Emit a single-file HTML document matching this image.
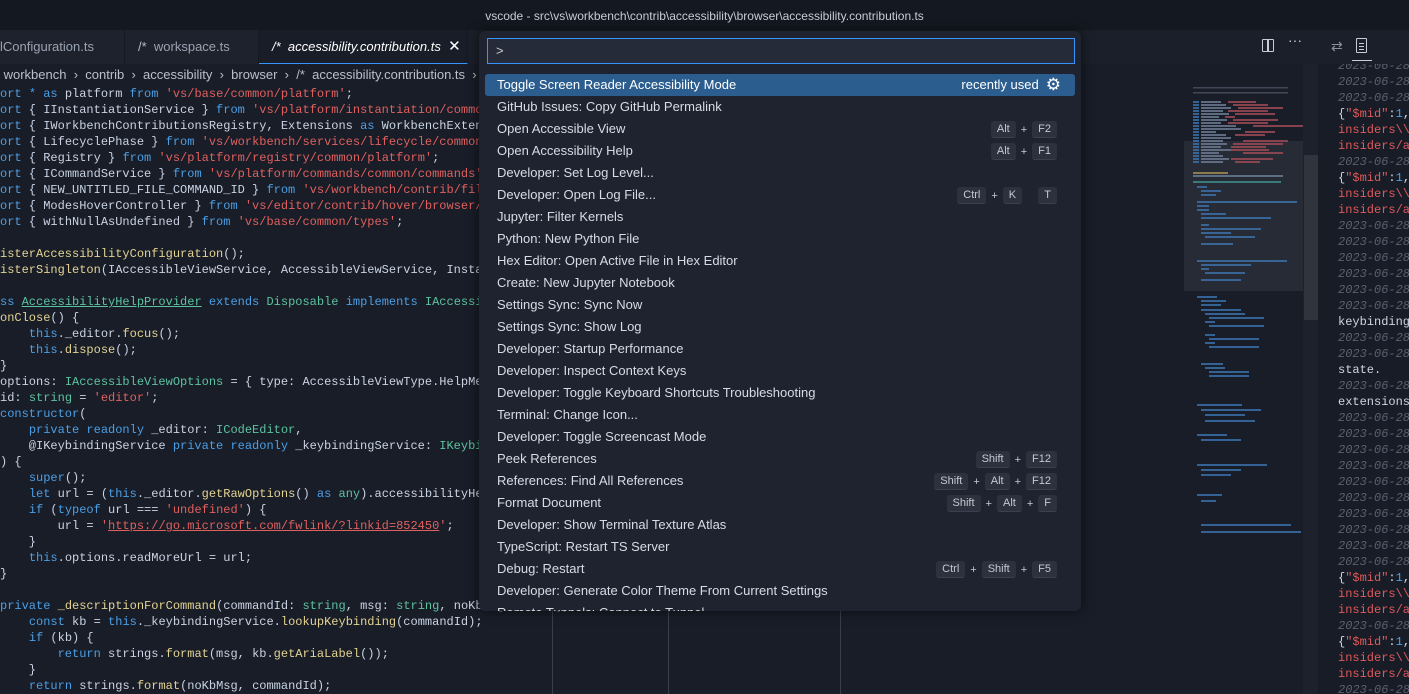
<!DOCTYPE html>
<html><head><meta charset="utf-8"><style>
*{margin:0;padding:0;box-sizing:border-box}
body{width:1409px;height:694px;overflow:hidden;background:#191d28;font-family:"Liberation Sans",sans-serif;position:relative;color:#cdd6e4}
.abs{position:absolute}
#title{left:0;top:0;width:1409px;height:30px;background:#141820;color:#c8ccd4;font-size:12px;text-align:center;line-height:32px}
#tabs{left:0;top:30px;width:1409px;height:34px;background:#1b1f29}
.tab{position:absolute;top:0;height:34px;background:#1e222c;color:#9aa3b2;font-size:13px;line-height:34px;border-right:1px solid #151922;white-space:nowrap;overflow:hidden}
.tab.act{background:#191d28;color:#fff;font-style:italic;border-bottom:1px solid #3794ff}
#crumb{left:0;top:64px;width:1183px;height:22px;color:#b8c0cc;font-size:13px;line-height:22px;white-space:nowrap;background:#191d28}
#code{left:0;top:86px;font-family:"Liberation Mono",monospace;font-size:12px;line-height:16px;white-space:pre;color:#c9d3e3}
.k{color:#4a9fe6}.s{color:#e0605e}.t{color:#5cc3a0}.f{color:#e3d391}.u{text-decoration:underline}
#mini{left:1183px;top:64px;width:120px;height:630px;background:#191d28}
#sb{left:1303px;top:64px;width:15px;height:630px;background:#1d212b}
#out{left:1318px;top:64px;width:91px;height:630px;background:#181c26;font-family:"Liberation Mono",monospace;font-size:12px;line-height:16px;white-space:pre;overflow:hidden}
.d{color:#5a6070;font-style:italic}
.r{color:#e05a5a}
#pal{left:479px;top:31px;width:602px;height:580px;background:#1f2330;border-radius:6px;box-shadow:0 0 12px rgba(0,0,0,.6);overflow:hidden}
#inp{position:absolute;left:8px;top:7px;width:588px;height:26px;background:#262b3a;border:1px solid #3794ff;color:#ccc;font-size:13px;line-height:24px;padding-left:8px}
.it{position:absolute;left:6px;width:590px;height:22px;line-height:22px;font-size:13px;color:#d7dce4;padding-left:12px;white-space:nowrap}
.it.sel{background:#2b5d8e;border-radius:3px;color:#fff}
.kb{position:absolute;right:18px;top:3px;font-size:11px;color:#c4c9d2;display:flex;align-items:center;gap:5px;line-height:16px}
.kc{background:#2c313d;border-bottom:1px solid #3a4050;border-radius:3px;padding:0 6px;height:17px}
.vl{position:absolute;top:611px;width:1px;height:83px;background:#3a3f4b}
</style></head><body>
<div id="title" class="abs">vscode - src\vs\workbench\contrib\accessibility\browser\accessibility.contribution.ts</div>
<div id="tabs" class="abs">
<div class="tab" style="left:0;width:125px;padding-left:0">lConfiguration.ts</div>
<div class="tab" style="left:125px;width:134px;padding-left:13px"><span style="color:#b5bcc8">/*</span>&nbsp; workspace.ts</div>
<div class="tab act" style="left:259px;width:209px;padding-left:13px"><span>/*</span>&nbsp; accessibility.contribution.ts &nbsp;<span style="font-style:normal;font-size:15px">✕</span></div>
<div class="abs" style="left:1262px;top:9px;width:12px;height:13px;border:1.5px solid #c8ccd4;border-radius:1px"></div>
<div class="abs" style="left:1267px;top:9px;width:1.5px;height:13px;background:#c8ccd4"></div>
<div class="abs" style="left:1288px;top:2px;color:#c8ccd4;font-size:14px">···</div>
<div class="abs" style="left:1331px;top:8px;color:#8a909c;font-size:14px">⇄</div>
<div class="abs" style="left:1356px;top:8px;width:11px;height:15px;border:1.5px solid #c8ccd4;border-radius:1px"></div>
<div class="abs" style="left:1359px;top:13px;width:5px;height:1px;background:#c8ccd4;box-shadow:0 3px 0 #c8ccd4,0 6px 0 #c8ccd4"></div>
<div class="abs" style="left:1352px;top:30px;width:20px;height:1px;background:#c8ccd4"></div>
</div>
<div id="crumb" class="abs">&nbsp;workbench &nbsp;›&nbsp; contrib &nbsp;›&nbsp; accessibility &nbsp;›&nbsp; browser &nbsp;›&nbsp; <span style="color:#b5bcc8">/*</span>&nbsp; accessibility.contribution.ts &nbsp;› <span style="color:#e0a040">&#9881;</span></div>
<div id="code" class="abs"><span class="k">ort</span> <span class="k">*</span> <span class="k">as</span> platform <span class="k">from</span> <span class="s">'vs/base/common/platform'</span>;
<span class="k">ort</span> { IInstantiationService } <span class="k">from</span> <span class="s">'vs/platform/instantiation/common/instantiation'</span>;
<span class="k">ort</span> { IWorkbenchContributionsRegistry, Extensions <span class="k">as</span> WorkbenchExtensions }
<span class="k">ort</span> { LifecyclePhase } <span class="k">from</span> <span class="s">'vs/workbench/services/lifecycle/common/lifecycle'</span>;
<span class="k">ort</span> { Registry } <span class="k">from</span> <span class="s">'vs/platform/registry/common/platform'</span>;
<span class="k">ort</span> { ICommandService } <span class="k">from</span> <span class="s">'vs/platform/commands/common/commands'</span>;
<span class="k">ort</span> { NEW_UNTITLED_FILE_COMMAND_ID } <span class="k">from</span> <span class="s">'vs/workbench/contrib/files/browser'</span>;
<span class="k">ort</span> { ModesHoverController } <span class="k">from</span> <span class="s">'vs/editor/contrib/hover/browser/hover'</span>;
<span class="k">ort</span> { withNullAsUndefined } <span class="k">from</span> <span class="s">'vs/base/common/types'</span>;

<span class="f">isterAccessibilityConfiguration</span>();
<span class="f">isterSingleton</span>(IAccessibleViewService, AccessibleViewService, InstantiationType);

<span class="k">ss</span> <span class="t u">AccessibilityHelpProvider</span> <span class="k">extends</span> <span class="t">Disposable</span> <span class="k">implements</span> <span class="t">IAccessibleContentProvider</span>
<span class="f">onClose</span>() {
    <span class="k">this</span>._editor.<span class="f">focus</span>();
    <span class="k">this</span>.<span class="f">dispose</span>();
}
options: <span class="t">IAccessibleViewOptions</span> = { type: AccessibleViewType.HelpMenu };
id: <span class="t">string</span> = <span class="s">'editor'</span>;
<span class="k">constructor</span>(
    <span class="k">private readonly</span> _editor: <span class="t">ICodeEditor</span>,
    @IKeybindingService <span class="k">private readonly</span> _keybindingService: <span class="t">IKeybindingService</span>
) {
    <span class="k">super</span>();
    <span class="k">let</span> url = (<span class="k">this</span>._editor.<span class="f">getRawOptions</span>() <span class="k">as</span> <span class="t">any</span>).accessibilityHelpUrl;
    <span class="k">if</span> (<span class="k">typeof</span> url === <span class="s">'undefined'</span>) {
        url = <span class="s">'<span class="u">https://go.microsoft.com/fwlink/?linkid=852450</span>'</span>;
    }
    <span class="k">this</span>.options.readMoreUrl = url;
}

<span class="k">private</span> <span class="f">_descriptionForCommand</span>(commandId: <span class="t">string</span>, msg: <span class="t">string</span>, noKbMsg: <span class="t">string</span>)
    <span class="k">const</span> kb = <span class="k">this</span>._keybindingService.<span class="f">lookupKeybinding</span>(commandId);
    <span class="k">if</span> (kb) {
        <span class="k">return</span> strings.<span class="f">format</span>(msg, kb.<span class="f">getAriaLabel</span>());
    }
    <span class="k">return</span> strings.<span class="f">format</span>(noKbMsg, commandId);</div>
<div class="vl" style="left:552px"></div><div class="vl" style="left:668px"></div><div class="vl" style="left:840px"></div>
<div id="mini" class="abs">
<div class="abs" style="left:1px;top:77px;width:119px;height:150px;background:#272b35"></div>
<svg class="abs" style="left:0;top:0" width="120" height="520">
<g opacity=".85">
<rect x="10" y="23" width="95" height="1.5" fill="#4a5060"/><rect x="10" y="28" width="95" height="1.5" fill="#4a5060"/>
<g fill="#3b6fa8"><rect x="10" y="37" width="6" height="2"/><rect x="10" y="40" width="6" height="2"/><rect x="10" y="43" width="6" height="2"/><rect x="10" y="46" width="6" height="2"/><rect x="10" y="49" width="6" height="2"/><rect x="10" y="52" width="6" height="2"/><rect x="10" y="55" width="6" height="2"/><rect x="10" y="58" width="6" height="2"/><rect x="10" y="61" width="6" height="2"/><rect x="10" y="64" width="6" height="2"/><rect x="10" y="67" width="6" height="2"/><rect x="10" y="70" width="6" height="2"/><rect x="10" y="73" width="6" height="2"/><rect x="10" y="76" width="6" height="2"/><rect x="10" y="79" width="6" height="2"/><rect x="10" y="82" width="6" height="2"/><rect x="10" y="85" width="6" height="2"/><rect x="10" y="88" width="6" height="2"/><rect x="10" y="91" width="6" height="2"/><rect x="10" y="94" width="6" height="2"/><rect x="10" y="97" width="6" height="2"/></g>
<g fill="#6b7890"><rect x="18" y="37" width="20" height="2"/><rect x="18" y="40" width="25" height="2"/><rect x="18" y="43" width="30" height="2"/><rect x="18" y="46" width="22" height="2"/><rect x="18" y="49" width="28" height="2"/><rect x="18" y="52" width="18" height="2"/><rect x="18" y="55" width="26" height="2"/><rect x="18" y="58" width="20" height="2"/><rect x="18" y="61" width="35" height="2"/><rect x="18" y="64" width="40" height="2"/><rect x="18" y="67" width="15" height="2"/><rect x="18" y="70" width="25" height="2"/><rect x="18" y="73" width="30" height="2"/><rect x="18" y="76" width="22" height="2"/><rect x="18" y="79" width="26" height="2"/><rect x="18" y="82" width="20" height="2"/><rect x="18" y="85" width="30" height="2"/><rect x="18" y="88" width="18" height="2"/><rect x="18" y="91" width="22" height="2"/><rect x="18" y="94" width="28" height="2"/><rect x="18" y="97" width="22" height="2"/></g>
<g fill="#9a4a55"><rect x="45" y="37" width="28" height="2"/><rect x="50" y="40" width="35" height="2"/><rect x="55" y="43" width="45" height="2"/><rect x="45" y="46" width="40" height="2"/><rect x="52" y="49" width="40" height="2"/><rect x="42" y="52" width="10" height="2"/><rect x="50" y="55" width="45" height="2"/><rect x="45" y="58" width="40" height="2"/><rect x="70" y="61" width="50" height="2"/><rect x="62" y="67" width="30" height="2"/><rect x="52" y="70" width="30" height="2"/><rect x="60" y="76" width="45" height="2"/><rect x="50" y="79" width="50" height="2"/><rect x="48" y="82" width="35" height="2"/><rect x="48" y="85" width="38" height="2"/><rect x="60" y="88" width="40" height="2"/><rect x="48" y="94" width="42" height="2"/><rect x="52" y="97" width="25" height="2"/></g>
<rect x="10" y="108" width="35" height="2" fill="#a08a50"/><rect x="10" y="111" width="90" height="2" fill="#6b7890"/>
<rect x="10" y="117" width="88" height="2" fill="#3d8a86"/>
<g fill="#3b6fa8"><rect x="14" y="122" width="10" height="2"/><rect x="18" y="126" width="20" height="2"/><rect x="18" y="130" width="15" height="2"/><rect x="14" y="137" width="100" height="2"/><rect x="14" y="141" width="12" height="2"/><rect x="14" y="145" width="12" height="2"/><rect x="18" y="149" width="25" height="2"/><rect x="18" y="153" width="70" height="2"/><rect x="18" y="160" width="8" height="2"/><rect x="18" y="164" width="60" height="2"/><rect x="18" y="168" width="30" height="2"/><rect x="22" y="172" width="50" height="2"/><rect x="18" y="179" width="32" height="2"/><rect x="14" y="196" width="90" height="2"/><rect x="18" y="200" width="50" height="2"/><rect x="18" y="204" width="8" height="2"/><rect x="22" y="208" width="40" height="2"/><rect x="18" y="215" width="40" height="2"/><rect x="14" y="232" width="20" height="2"/><rect x="18" y="236" width="25" height="2"/><rect x="18" y="240" width="20" height="2"/><rect x="18" y="245" width="40" height="2"/><rect x="22" y="249" width="40" height="2"/><rect x="26" y="253" width="55" height="2"/><rect x="22" y="257" width="10" height="2"/><rect x="26" y="261" width="55" height="2"/><rect x="22" y="270" width="10" height="2"/><rect x="26" y="274" width="50" height="2"/><rect x="22" y="278" width="10" height="2"/><rect x="26" y="282" width="50" height="2"/><rect x="18" y="299" width="22" height="2"/><rect x="22" y="303" width="20" height="2"/><rect x="26" y="307" width="40" height="2"/><rect x="26" y="311" width="40" height="2"/><rect x="14" y="340" width="45" height="2"/><rect x="18" y="345" width="60" height="2"/><rect x="22" y="350" width="40" height="2"/><rect x="22" y="356" width="50" height="2"/><rect x="14" y="370" width="30" height="2"/><rect x="18" y="375" width="40" height="2"/><rect x="14" y="400" width="70" height="2"/><rect x="18" y="405" width="40" height="2"/><rect x="18" y="410" width="30" height="2"/><rect x="14" y="430" width="25" height="2"/><rect x="18" y="436" width="15" height="2"/><rect x="18" y="460" width="90" height="2"/><rect x="18" y="467" width="100" height="2"/></g>
</g></svg>
</div>
<div id="sb" class="abs"><div class="abs" style="left:1px;top:91px;width:14px;height:165px;background:#30343d"></div></div>
<div id="out" class="abs"><div style="position:absolute;left:20px;top:-6px"><span class="d">2023-06-28</span>
<span class="d">2023-06-28</span>
<span class="d">2023-06-28</span>
{<span class="r">"$mid"</span>:<span class="k">1</span>,
<span class="r">insiders\\</span>
<span class="r">insiders/a</span>
<span class="d">2023-06-28</span>
{<span class="r">"$mid"</span>:<span class="k">1</span>,
<span class="r">insiders\\</span>
<span class="r">insiders/a</span>
<span class="d">2023-06-28</span>
<span class="d">2023-06-28</span>
<span class="d">2023-06-28</span>
<span class="d">2023-06-28</span>
<span class="d">2023-06-28</span>
<span class="d">2023-06-28</span>
keybinding
<span class="d">2023-06-28</span>
<span class="d">2023-06-28</span>
state.
<span class="d">2023-06-28</span>
extensions
<span class="d">2023-06-28</span>
<span class="d">2023-06-28</span>
<span class="d">2023-06-28</span>
<span class="d">2023-06-28</span>
<span class="d">2023-06-28</span>
<span class="d">2023-06-28</span>
<span class="d">2023-06-28</span>
<span class="d">2023-06-28</span>
<span class="d">2023-06-28</span>
<span class="d">2023-06-28</span>
{<span class="r">"$mid"</span>:<span class="k">1</span>,
<span class="r">insiders\\</span>
<span class="r">insiders/a</span>
<span class="d">2023-06-28</span>
{<span class="r">"$mid"</span>:<span class="k">1</span>,
<span class="r">insiders\\</span>
<span class="r">insiders/a</span>
<span class="d">2023-06-28</span></div></div>
<div id="pal" class="abs">
<div id="inp">&gt;</div>
<div class="it sel" style="top:43px">Toggle Screen Reader Accessibility Mode<span class="kb" style="font-size:13px;color:#fff;top:0;line-height:22px;right:14px">recently used <span style="font-size:17px;margin-left:2px">⚙</span></span></div>
<div class="it" style="top:65px">GitHub Issues: Copy GitHub Permalink</div>
<div class="it" style="top:87px">Open Accessible View<span class="kb"><span class="kc">Alt</span>+<span class="kc">F2</span></span></div>
<div class="it" style="top:109px">Open Accessibility Help<span class="kb"><span class="kc">Alt</span>+<span class="kc">F1</span></span></div>
<div class="it" style="top:131px">Developer: Set Log Level...</div>
<div class="it" style="top:153px">Developer: Open Log File...<span class="kb"><span class="kc">Ctrl</span>+<span class="kc">K</span>&nbsp;&nbsp;<span class="kc">T</span></span></div>
<div class="it" style="top:175px">Jupyter: Filter Kernels</div>
<div class="it" style="top:197px">Python: New Python File</div>
<div class="it" style="top:219px">Hex Editor: Open Active File in Hex Editor</div>
<div class="it" style="top:241px">Create: New Jupyter Notebook</div>
<div class="it" style="top:263px">Settings Sync: Sync Now</div>
<div class="it" style="top:285px">Settings Sync: Show Log</div>
<div class="it" style="top:307px">Developer: Startup Performance</div>
<div class="it" style="top:329px">Developer: Inspect Context Keys</div>
<div class="it" style="top:351px">Developer: Toggle Keyboard Shortcuts Troubleshooting</div>
<div class="it" style="top:373px">Terminal: Change Icon...</div>
<div class="it" style="top:395px">Developer: Toggle Screencast Mode</div>
<div class="it" style="top:417px">Peek References<span class="kb"><span class="kc">Shift</span>+<span class="kc">F12</span></span></div>
<div class="it" style="top:439px">References: Find All References<span class="kb"><span class="kc">Shift</span>+<span class="kc">Alt</span>+<span class="kc">F12</span></span></div>
<div class="it" style="top:461px">Format Document<span class="kb"><span class="kc">Shift</span>+<span class="kc">Alt</span>+<span class="kc">F</span></span></div>
<div class="it" style="top:483px">Developer: Show Terminal Texture Atlas</div>
<div class="it" style="top:505px">TypeScript: Restart TS Server</div>
<div class="it" style="top:527px">Debug: Restart<span class="kb"><span class="kc">Ctrl</span>+<span class="kc">Shift</span>+<span class="kc">F5</span></span></div>
<div class="it" style="top:549px">Developer: Generate Color Theme From Current Settings</div>
<div class="it" style="top:571px">Remote Tunnels: Connect to Tunnel</div>
</div>
</body></html>
